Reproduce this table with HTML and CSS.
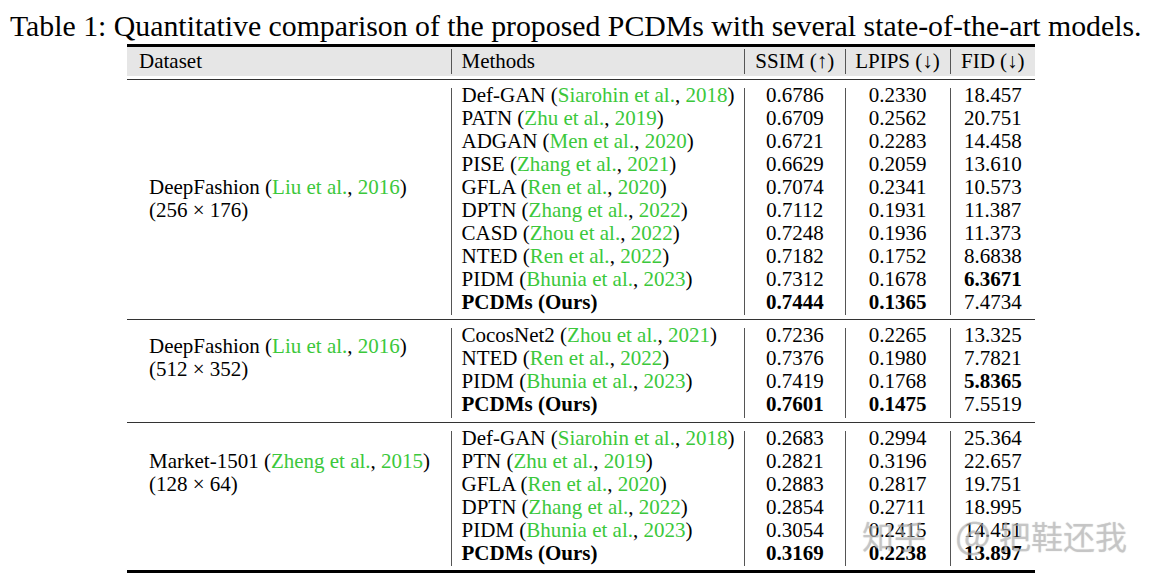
FILE: index.html
```html
<!DOCTYPE html>
<html lang="en">
<head>
<meta charset="utf-8">
<title>Table 1</title>
<link rel="stylesheet" href="styles.css">
</head>
<body>
<div class="page">
  <div class="caption">Table 1: Quantitative comparison of the proposed PCDMs with several state-of-the-art models.</div>
  <div class="table">
    <div class="grid thead">
      <div class="cell hd">Dataset</div>
      <div class="cell m sep">Methods</div>
      <div class="cell num sep">SSIM (↑)</div>
      <div class="cell num sep">LPIPS (↓)</div>
      <div class="cell num sep">FID (↓)</div>
    </div>

    <div class="grid group">
      <div class="cell ds"><div class="lines ds-g1">DeepFashion (<span class="cite">Liu et al.</span>, <span class="cite">2016</span>)<br>(256 × 176)</div></div>
      <div class="cell m sep"><div class="lines">
        <div>Def-GAN (<span class="cite">Siarohin et al.</span>, <span class="cite">2018</span>)</div>
        <div>PATN (<span class="cite">Zhu et al.</span>, <span class="cite">2019</span>)</div>
        <div>ADGAN (<span class="cite">Men et al.</span>, <span class="cite">2020</span>)</div>
        <div>PISE (<span class="cite">Zhang et al.</span>, <span class="cite">2021</span>)</div>
        <div>GFLA (<span class="cite">Ren et al.</span>, <span class="cite">2020</span>)</div>
        <div>DPTN (<span class="cite">Zhang et al.</span>, <span class="cite">2022</span>)</div>
        <div>CASD (<span class="cite">Zhou et al.</span>, <span class="cite">2022</span>)</div>
        <div>NTED (<span class="cite">Ren et al.</span>, <span class="cite">2022</span>)</div>
        <div>PIDM (<span class="cite">Bhunia et al.</span>, <span class="cite">2023</span>)</div>
        <div><b>PCDMs (Ours)</b></div>
      </div></div>
      <div class="cell num sep"><div class="lines">
        <div>0.6786</div><div>0.6709</div><div>0.6721</div><div>0.6629</div><div>0.7074</div>
        <div>0.7112</div><div>0.7248</div><div>0.7182</div><div>0.7312</div><div><b>0.7444</b></div>
      </div></div>
      <div class="cell num sep"><div class="lines">
        <div>0.2330</div><div>0.2562</div><div>0.2283</div><div>0.2059</div><div>0.2341</div>
        <div>0.1931</div><div>0.1936</div><div>0.1752</div><div>0.1678</div><div><b>0.1365</b></div>
      </div></div>
      <div class="cell num sep"><div class="lines">
        <div>18.457</div><div>20.751</div><div>14.458</div><div>13.610</div><div>10.573</div>
        <div>11.387</div><div>11.373</div><div>8.6838</div><div><b>6.3671</b></div><div>7.4734</div>
      </div></div>
    </div>

    <div class="grid group">
      <div class="cell ds"><div class="lines ds-g2">DeepFashion (<span class="cite">Liu et al.</span>, <span class="cite">2016</span>)<br>(512 × 352)</div></div>
      <div class="cell m sep"><div class="lines">
        <div>CocosNet2 (<span class="cite">Zhou et al.</span>, <span class="cite">2021</span>)</div>
        <div>NTED (<span class="cite">Ren et al.</span>, <span class="cite">2022</span>)</div>
        <div>PIDM (<span class="cite">Bhunia et al.</span>, <span class="cite">2023</span>)</div>
        <div><b>PCDMs (Ours)</b></div>
      </div></div>
      <div class="cell num sep"><div class="lines">
        <div>0.7236</div><div>0.7376</div><div>0.7419</div><div><b>0.7601</b></div>
      </div></div>
      <div class="cell num sep"><div class="lines">
        <div>0.2265</div><div>0.1980</div><div>0.1768</div><div><b>0.1475</b></div>
      </div></div>
      <div class="cell num sep"><div class="lines">
        <div>13.325</div><div>7.7821</div><div><b>5.8365</b></div><div>7.5519</div>
      </div></div>
    </div>

    <div class="grid group">
      <div class="cell ds"><div class="lines ds-g3">Market-1501 (<span class="cite">Zheng et al.</span>, <span class="cite">2015</span>)<br>(128 × 64)</div></div>
      <div class="cell m sep"><div class="lines">
        <div>Def-GAN (<span class="cite">Siarohin et al.</span>, <span class="cite">2018</span>)</div>
        <div>PTN (<span class="cite">Zhu et al.</span>, <span class="cite">2019</span>)</div>
        <div>GFLA (<span class="cite">Ren et al.</span>, <span class="cite">2020</span>)</div>
        <div>DPTN (<span class="cite">Zhang et al.</span>, <span class="cite">2022</span>)</div>
        <div>PIDM (<span class="cite">Bhunia et al.</span>, <span class="cite">2023</span>)</div>
        <div><b>PCDMs (Ours)</b></div>
      </div></div>
      <div class="cell num sep"><div class="lines">
        <div>0.2683</div><div>0.2821</div><div>0.2883</div><div>0.2854</div><div>0.3054</div><div><b>0.3169</b></div>
      </div></div>
      <div class="cell num sep"><div class="lines">
        <div>0.2994</div><div>0.3196</div><div>0.2817</div><div>0.2711</div><div>0.2415</div><div><b>0.2238</b></div>
      </div></div>
      <div class="cell num sep"><div class="lines">
        <div>25.364</div><div>22.657</div><div>19.751</div><div>18.995</div><div>14.451</div><div><b>13.897</b></div>
      </div></div>
    </div>
  </div>
  <div class="watermark"><span class="wm-site">知乎</span><span class="wm-at">@</span><span>把鞋还我</span></div>
</div>
</body>
</html>
```

FILE: styles.css
```css
html, body {
  margin: 0;
  padding: 0;
  background: #ffffff;
}

body {
  font-family: "Liberation Serif", "Times New Roman", serif;
  color: #000;
}

.page {
  position: relative;
  width: 1160px;
  height: 584px;
  overflow: hidden;
}

.caption {
  padding: 9px 0 0 10px;
  font-size: 29.8px;
  line-height: 34px;
  white-space: nowrap;
}

.table {
  margin: 1px 0 0 127px;
  width: 908px;
  font-size: 21px;
  line-height: 23px;
  border-bottom: 3px solid #000;
}

.grid {
  display: grid;
  grid-template-columns: 323.5px 293.5px 100.5px 105px 85.5px;
}

.cell {
  white-space: nowrap;
}

.thead {
  border-top: 3px solid #000;
  background: #e6e6e6;
  padding: 2px 0;
  margin-bottom: 2.5px;
}

.thead .cell {
  padding-top: 1px;
  padding-bottom: 1px;
}

.sep {
  border-left: 1px solid #555;
}

.group {
  border-top: 1px solid #333;
  padding: 8px 0 4px;
}

.group .cell {
  padding-bottom: 1.5px;
}

.lines {
  margin-top: -4px;
}

.hd {
  padding-left: 12px;
}

.ds {
  padding-left: 22px;
}

.m {
  padding-left: 10px;
}

.num {
  text-align: center;
}

.ds-g1 {
  padding-top: 92px;
}

.ds-g2 {
  padding-top: 10.5px;
}

.ds-g3 {
  padding-top: 23px;
}

.cite {
  color: #3bc83b;
}

b {
  font-weight: bold;
}

.watermark {
  position: absolute;
  left: 862px;
  top: 513px;
  display: flex;
  align-items: baseline;
  font-family: "Noto Sans CJK SC", sans-serif;
  font-size: 32px;
  line-height: 40px;
  color: rgba(190, 190, 190, 0.55);
  text-shadow: 0 0 1px rgba(110, 110, 110, 0.35);
  white-space: nowrap;
}

.wm-at {
  margin: 0 8px 0 29px;
  font-size: 38px;
}
```
